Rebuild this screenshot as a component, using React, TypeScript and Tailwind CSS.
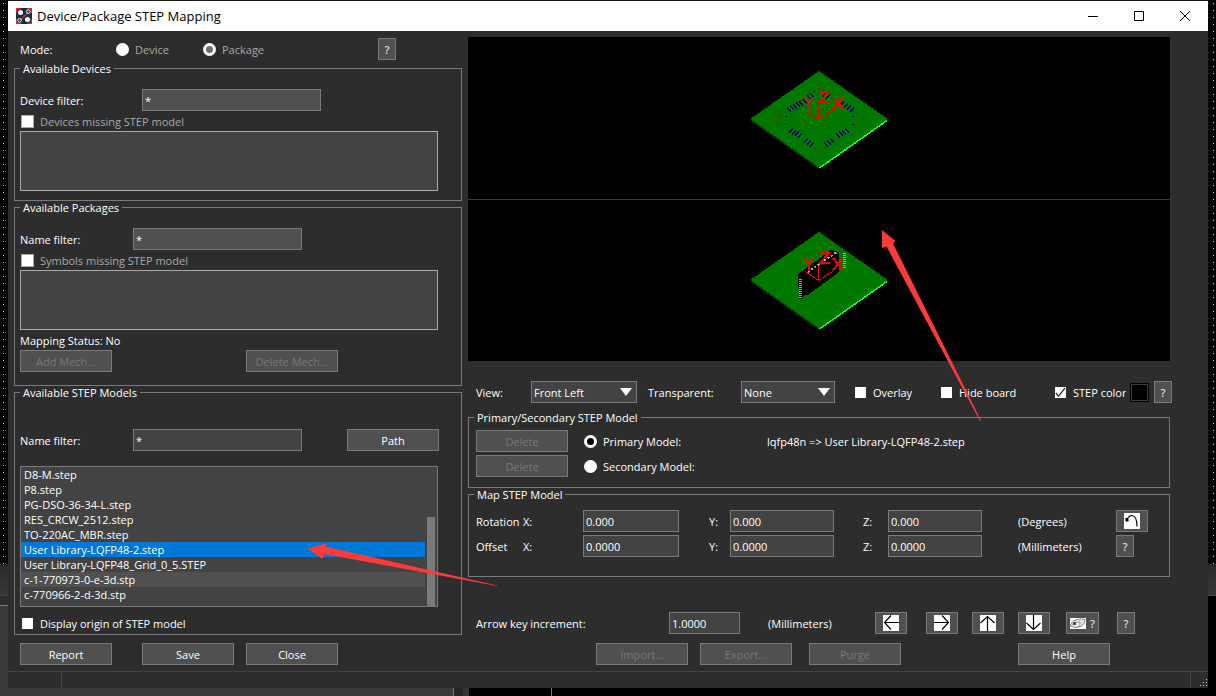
import { useState } from "react";
import type { ButtonHTMLAttributes, InputHTMLAttributes, ReactNode } from "react";
import { twMerge } from "tailwind-merge";

const STEP_MODELS = [
  "D8-M.step",
  "P8.step",
  "PG-DSO-36-34-L.step",
  "RES_CRCW_2512.step",
  "TO-220AC_MBR.step",
  "User Library-LQFP48-2.step",
  "User Library-LQFP48_Grid_0_5.STEP",
  "c-1-770973-0-e-3d.stp",
  "c-770966-2-d-3d.stp",
];

function Button({
  className,
  ...props
}: ButtonHTMLAttributes<HTMLButtonElement>) {
  return (
    <button
      type="button"
      className={twMerge(
        "flex h-[22px] w-[92px] shrink-0 items-center justify-center border border-[#7a7a7a] bg-[#505050] text-white disabled:text-[#787878]",
        className
      )}
      {...props}
    />
  );
}

function HelpButton({ label }: { label: string }) {
  return (
    <Button className="w-[18px] font-semibold text-[#dcdcdc]" aria-label={label}>
      ?
    </Button>
  );
}

function TextField({
  className,
  ...props
}: InputHTMLAttributes<HTMLInputElement>) {
  return (
    <input
      type="text"
      className={twMerge(
        "h-[22px] min-w-0 border border-[#7a7a7a] bg-[#434343] px-[2px] text-white outline-none disabled:bg-[#505050]",
        className
      )}
      {...props}
    />
  );
}

function Group({
  title,
  className,
  children,
}: {
  title: string;
  className?: string;
  children: ReactNode;
}) {
  return (
    <fieldset
      className={twMerge("min-w-0 border border-[#7a7a7a] px-[5px]", className)}
    >
      <legend className="px-[3px] leading-[13px]">{title}</legend>
      {children}
    </fieldset>
  );
}

interface CheckProps {
  id: string;
  label: string;
  disabled?: boolean;
  defaultChecked?: boolean;
  className?: string;
}

function Check({ id, label, disabled, defaultChecked, className }: CheckProps) {
  return (
    <div className={twMerge("flex h-5 items-center", className)}>
      <span className="grid size-[15px] shrink-0 place-items-center">
        <input
          id={id}
          type="checkbox"
          disabled={disabled}
          defaultChecked={defaultChecked}
          className="peer col-start-1 row-start-1 size-[11px] appearance-none bg-white disabled:size-[13px] disabled:border disabled:border-[#aaaaaa]"
        />
        <svg
          viewBox="0 0 11 11"
          className="pointer-events-none col-start-1 row-start-1 hidden size-[11px] peer-checked:block"
          fill="none"
          stroke="#222"
          strokeWidth="1.3"
        >
          <path d="M1 6 3.500 9.300 10 1.200" />
        </svg>
      </span>
      <label
        htmlFor={id}
        className={twMerge(
          "ml-[5px] overflow-hidden whitespace-nowrap",
          disabled && "text-[#a8a8a8]"
        )}
      >
        {label}
      </label>
    </div>
  );
}

function Radio({
  id,
  name,
  label,
  disabled,
  defaultChecked,
  className,
}: CheckProps & { name: string }) {
  return (
    <div className={twMerge("flex items-center gap-[6px]", className)}>
      <input
        id={id}
        name={name}
        type="radio"
        disabled={disabled}
        defaultChecked={defaultChecked}
        className="size-[13px] appearance-none rounded-full border-[3px] border-white bg-white checked:bg-black disabled:checked:bg-[#6e6e6e]"
      />
      <label htmlFor={id} className={disabled ? "text-[#a8a8a8]" : ""}>
        {label}
      </label>
    </div>
  );
}

function Dropdown({
  id,
  options,
  className,
}: {
  id: string;
  options: string[];
  className: string;
}) {
  return (
    <div className={twMerge("grid items-center", className)}>
      <select
        id={id}
        className="col-start-1 row-start-1 h-[22px] w-full appearance-none border border-[#7a7a7a] bg-[#434343] px-[2px] text-white outline-none"
      >
        {options.map((option) => (
          <option key={option}>{option}</option>
        ))}
      </select>
      <svg
        viewBox="0 0 12 8"
        className="pointer-events-none col-start-1 row-start-1 mr-[5px] h-2 w-3 justify-self-end"
      >
        <path d="M0 0h12L6 8z" fill="#fff" />
      </svg>
    </div>
  );
}

function Board({ children }: { children?: ReactNode }) {
  return (
    <svg
      viewBox="751 70 137 98"
      className="h-[98px] w-[137px]"
      shapeRendering="crispEdges"
      fill="none"
    >
      <path d="M819 70 887 117.500v2l-68 48-68-48v-2z" fill="#007800" />
      <path d="M751 119 819 167" stroke="#0a3d0a" strokeWidth="1.500" />
      <path d="M819.500 167 887 119.500" stroke="#1cff1c" strokeWidth="1.500" />
      {children}
      <g stroke="#ff0000">
        <path d="M818.500 104v14M818.500 118.500l-13-9M818.500 118.500 834 108.500" />
        <path
          d="M804 96l4.500 6 4.500-6M808.500 102v7M819 91h10l-9 10h9.500M833 96l10 12M843 96l-10 12"
          strokeWidth="2"
        />
      </g>
    </svg>
  );
}

function PadRows() {
  const pads = [
    [787, 109], [790, 107], [793, 106], [796, 104], [799, 103], [803, 101],
    [807, 97], [810, 95], [823, 94], [826, 96],
    [840, 103], [844, 105], [847, 107], [850, 109],
  ];
  const frontPads = [
    [789, 130], [792, 132], [795, 133], [798, 135], [804, 140], [807, 142],
    [810, 144],
  ];
  return (
    <>
      <path
        d="M819 87 865 118.500 819 150.500 773.500 118.500z"
        stroke="#5a3200"
        strokeDasharray="2 2"
      />
      <g stroke="#00007c" strokeWidth="1.200">
        {pads.map(([x, y]) => (
          <path
            key={x}
            d={x < 819 ? `M${x} ${y - 3}l4 5` : `M${x} ${y + 2}l4-5`}
          />
        ))}
        {frontPads.map(([x, y]) => (
          <path
            key={x}
            d={`M${x} ${y + 2}l4-5M${1638 - x} ${y + 2}l-4-5`}
          />
        ))}
      </g>
      <path d="M785 115.500h2M852 115.500h2M785 123.500h1M852 123.500h2" stroke="#00007c" />
    </>
  );
}

function ChipBody() {
  return (
    <>
      <path d="M798 112 831 88l8 2v20l-31 23h-4l-2 4h-3z" fill="#000" />
      <path
        d="M808 110 837 90"
        stroke="#b0b0b0"
        strokeWidth="2"
        strokeDasharray="2 2"
      />
      <path
        d="M800.500 117v20M844.500 91v15"
        stroke="#a0a0a0"
        strokeWidth="3"
        strokeDasharray="1 1"
      />
    </>
  );
}

function ArrowIcon({ d }: { d: string }) {
  return (
    <svg
      viewBox="0 0 16 16"
      className="size-4 bg-white"
      fill="none"
      stroke="#000"
      strokeWidth="1.200"
    >
      <path d={d} />
    </svg>
  );
}

const NUDGES = [
  { label: "Nudge left", d: "M16 7.500H1.500M8 .5l-6.500 7L8 14.500" },
  { label: "Nudge right", d: "M0 7.500h14.500M8 .5l6.500 7-6.500 7" },
  { label: "Nudge up", d: "M7.500 16V1.500M.5 8l7-6.500 7 6.500" },
  { label: "Nudge down", d: "M7.500 0v14.500M.5 8l7 6.500 7-6.500" },
];

function AxisRow({
  name,
  value,
  unit,
  children,
}: {
  name: string;
  value: string;
  unit: string;
  children: ReactNode;
}) {
  const id = name.toLowerCase();
  return (
    <div className="grid grid-cols-[47px_60px_96px_30px_21px_104px_29px_25px_94px_36px_98px_32px] items-center">
      <span>{name}</span>
      <label htmlFor={`${id}-x`}>X:</label>
      <TextField id={`${id}-x`} defaultValue={value} />
      <label htmlFor={`${id}-y`} className="col-start-5">
        Y:
      </label>
      <TextField id={`${id}-y`} defaultValue={value} />
      <label htmlFor={`${id}-z`} className="col-start-8">
        Z:
      </label>
      <TextField id={`${id}-z`} defaultValue={value} />
      <span className="col-start-11">{unit}</span>
      {children}
    </div>
  );
}

function TitleBar() {
  return (
    <header className="flex h-[30px] items-center bg-white text-black">
      <svg viewBox="0 0 16 16" className="ml-2 size-4">
        <rect width="16" height="16" rx="1.500" fill="#12303c" />
        <path
          d="M5 11.500 11.500 5M.5 5V2Q.5.5 2 .5h3M11 .5h3.500q1 0 1 1.500v3M15.500 11v3q0 1.500-1.500 1.500h-3M5 15.500H2Q.5 15.500.5 14v-3"
          stroke="#d8203c"
          strokeWidth="1.500"
          fill="none"
        />
        <circle cx="4.500" cy="4.500" r="2.500" fill="#fff" />
        <circle cx="11.500" cy="11.500" r="2.500" fill="#fff" />
        <circle cx="12.300" cy="3.600" r="1.800" fill="none" stroke="#fff" />
        <circle cx="3.600" cy="12.300" r="1.800" fill="none" stroke="#fff" />
      </svg>
      <h1 className="ml-[5px] flex-1 text-[13px]">
        Device/Package STEP Mapping
      </h1>
      {[
        { label: "Minimize", d: "M0 5.500h10" },
        { label: "Maximize", d: "M.5.5h9v9h-9z" },
        { label: "Close window", d: "M0 0l10 10M10 0 0 10" },
      ].map(({ label, d }) => (
        <button
          key={label}
          type="button"
          aria-label={label}
          className="grid h-[30px] w-[46px] place-items-center"
        >
          <svg
            viewBox="0 0 10 10"
            className="size-[10px]"
            fill="none"
            stroke="#000"
          >
            <path d={d} />
          </svg>
        </button>
      ))}
    </header>
  );
}

function LibraryColumn() {
  const [selected, setSelected] = useState("User Library-LQFP48-2.step");

  return (
    <div className="w-[448px] shrink-0 pt-[7px]">
      <div className="mb-[2px] flex h-[22px] items-center pl-[6px]">
        <span className="w-24">Mode:</span>
        <Radio id="mode-device" name="mode" label="Device" disabled className="w-[87px]" />
        <Radio id="mode-package" name="mode" label="Package" disabled defaultChecked className="w-[175px]" />
        <HelpButton label="Mode help" />
      </div>

      <Group title="Available Devices" className="pb-[9px] pt-[14px]">
        <div className="flex items-center">
          <label htmlFor="device-filter" className="w-[122px]">
            Device filter:
          </label>
          <TextField id="device-filter" defaultValue="*" disabled className="w-[179px]" />
        </div>
        <Check id="devices-missing" label="Devices missing STEP model" disabled />
        <div
          role="listbox"
          aria-label="Devices"
          className="h-[60px] w-[418px] border border-[#aaaaaa] bg-[#434343]"
        />
      </Group>

      <Group title="Available Packages" className="pb-[13px] pt-[14px]">
        <div className="flex items-center">
          <label htmlFor="package-filter" className="w-[113px]">
            Name filter:
          </label>
          <TextField id="package-filter" defaultValue="*" disabled className="w-[169px]" />
        </div>
        <Check id="symbols-missing" label="Symbols missing STEP model" disabled />
        <div
          role="listbox"
          aria-label="Packages"
          className="h-[60px] w-[418px] border border-[#aaaaaa] bg-[#434343]"
        />
        <p className="h-5 leading-[22px]">Mapping Status: No</p>
        <div className="flex gap-[134px]">
          <Button disabled>Add Mech...</Button>
          <Button disabled>Delete Mech...</Button>
        </div>
      </Group>

      <Group title="Available STEP Models" className="pb-px pt-[30px]">
        <div className="flex items-center">
          <label htmlFor="step-filter" className="w-[113px]">
            Name filter:
          </label>
          <TextField id="step-filter" defaultValue="*" className="w-[169px]" />
          <Button className="ml-[45px]">Path</Button>
        </div>
        <div className="mt-[15px] flex h-[141px] w-[418px] justify-between border border-[#7a7a7a] bg-[#434343] pr-[2px]">
          <ul role="listbox" aria-label="STEP models" className="w-[404px]">
            {STEP_MODELS.map((model, i) => (
              <li
                key={model}
                role="option"
                aria-selected={model === selected}
                onClick={() => setSelected(model)}
                className={twMerge(
                  "h-[15px] px-[3px] leading-[15px]",
                  i === 7 && "bg-[#505050]",
                  model === selected && "bg-[#0078d7]"
                )}
              >
                {model}
              </li>
            ))}
          </ul>
          <div className="h-[89px] w-2 self-end bg-[#7a7a7a]" />
        </div>
        <Check id="display-origin" label="Display origin of STEP model" className="mt-[6px]" />
      </Group>

      <div className="mt-2 flex pl-[6px]">
        <Button>Report</Button>
        <Button className="ml-[30px]">Save</Button>
        <Button className="ml-3">Close</Button>
      </div>
    </div>
  );
}

function MappingColumn() {
  return (
    <div className="flex min-w-0 flex-1 flex-col pr-[38px] pt-[6px]">
      <div className="bg-black">
        <div className="grid h-[163px] place-items-center border-b border-[#3c3c3c] pt-1">
          <Board>
            <PadRows />
          </Board>
        </div>
        <div className="grid h-[161px] place-items-center">
          <Board>
            <ChipBody />
          </Board>
        </div>
      </div>

      <div className="mt-5 -mr-[2px] flex items-center pl-2">
        <label htmlFor="view" className="w-[55px]">
          View:
        </label>
        <Dropdown id="view" options={["Front Left", "Front Right", "Top"]} className="w-[106px]" />
        <label htmlFor="transparent" className="ml-[11px] w-[93px]">
          Transparent:
        </label>
        <Dropdown id="transparent" options={["None", "Board", "All"]} className="w-[94px]" />
        <Check id="overlay" label="Overlay" className="ml-[18px] w-[86px]" />
        <Check id="hide-board" label="Hide board" className="w-[114px]" />
        <Check id="step-color" label="STEP color" defaultChecked className="w-[73px]" />
        <button
          type="button"
          aria-label="Pick STEP color"
          className="ml-1 mr-[5px] size-[19px] border border-black bg-black ring-1 ring-inset ring-[#3c3c3c]"
        />
        <HelpButton label="View help" />
      </div>

      <Group title="Primary/Secondary STEP Model" className="mt-2 pb-[10px] pt-[6px]">
        <div className="grid grid-cols-[108px_183px_1fr] items-center gap-y-[3px] pl-[2px]">
          <Button disabled>Delete</Button>
          <Radio id="primary" name="model" label="Primary Model:" defaultChecked />
          <span>lqfp48n =&gt; User Library-LQFP48-2.step</span>
          <Button disabled>Delete</Button>
          <Radio id="secondary" name="model" label="Secondary Model:" />
        </div>
      </Group>

      <Group title="Map STEP Model" className="pb-[19px] pt-[9px]">
        <div className="flex flex-col gap-[3px] pl-[2px]">
          <AxisRow name="Rotation" value="0.000" unit="(Degrees)">
            <Button className="w-8" aria-label="Rotate">
              <svg viewBox="0 0 16 16" className="size-4 bg-white" fill="none">
                <path d="M3 6.500Q5 2.500 8 2.500q5 .5 5 11" stroke="#000" strokeWidth="1.200" />
                <path d="M1.500 4.500 4.500 6v2.500h-3z" fill="#000" />
              </svg>
            </Button>
          </AxisRow>
          <AxisRow name="Offset" value="0.0000" unit="(Millimeters)">
            <HelpButton label="Map help" />
          </AxisRow>
        </div>
      </Group>

      <div className="mt-[35px] flex items-center pl-2">
        <label htmlFor="increment" className="w-[193px]">
          Arrow key increment:
        </label>
        <TextField id="increment" defaultValue="1.0000" className="w-[71px]" />
        <span className="ml-7 w-[107px]">(Millimeters)</span>
        <div className="flex gap-[14px]">
          {NUDGES.map(({ label, d }) => (
            <Button key={label} aria-label={label} className="w-8 first:mr-[5px]">
              <ArrowIcon d={d} />
            </Button>
          ))}
        </div>
        <Button className="ml-4 w-[33px] gap-1 font-semibold text-[#dcdcdc]" aria-label="Preview help">
          <svg viewBox="0 0 16 11" className="h-[11px] w-4 bg-white" fill="none" stroke="#888">
            <path d="M.5 7Q2 2.500 7 1.500q5-1 8 0 0 5-4 7-5 2-10 0z" fill="#e4e4e4" />
            <path d="M2 7q3-4 8-3 1 3-2 5" strokeWidth=".8" />
            <circle cx="4.500" cy="5.500" r="1.500" fill="#333" stroke="none" />
          </svg>
          ?
        </Button>
        <span className="ml-[18px]">
          <HelpButton label="Arrow key help" />
        </span>
      </div>

      <div className="mt-[9px] flex pl-32">
        <Button disabled>Import...</Button>
        <Button disabled className="ml-3">Export...</Button>
        <Button disabled className="ml-[17px]">Purge</Button>
        <Button className="ml-[117px]">Help</Button>
      </div>
    </div>
  );
}

// The board editor that shows on both sides of the dialog
function DeskEdge({ side }: { side: "left" | "right" }) {
  return (
    <div className="flex w-2 shrink-0 flex-col">
      <div
        className={twMerge(
          "h-[564px] bg-black bg-[radial-gradient(circle_at_3.5px_3.5px,#e0e0e0_0.7px,transparent_0.8px)] bg-[size:8px_7px]",
          side === "right" && "bg-[position:2px_0px]"
        )}
      />
      <div className="h-8 border-b border-[#444444] bg-linear-to-b from-[#2a2a2a] to-[#383838]" />
      {side === "left" && (
        <>
          <div className="h-[10px] border-b border-[#777777] bg-[#2d2d2d]" />
          <div className="flex-1 bg-[#3a3a3a]" />
        </>
      )}
    </div>
  );
}

export default function App() {
  return (
    <div className="relative flex min-h-screen flex-col overflow-hidden bg-black font-['Open_Sans','Segoe_UI',sans-serif] text-[11px] leading-[15px] text-white">
      <div className="flex">
        <DeskEdge side="left" />
        <main className="min-w-0 flex-1 bg-[#2d2d2d]">
          <div className="h-px bg-[#1a1a1a]" />
          <TitleBar />
          <div className="flex gap-[6px] pl-[6px]">
            <LibraryColumn />
            <MappingColumn />
          </div>
          <footer className="mt-[6px] flex h-[17px] border-t border-[#444444]">
            <div className="w-[54px] border-r border-[#444444]" />
            <div className="flex-1 border-r border-[#444444]" />
            <svg viewBox="0 0 17 16" className="h-4 w-[17px]" fill="#c8c8c8">
              <path d="M15 7h1v1h-1zM12 10h1v1h-1zM15 10h1v1h-1zM9 13h1v1h-1zM12 13h1v1h-1zM15 13h1v1h-1z" />
            </svg>
          </footer>
        </main>
        <DeskEdge side="right" />
      </div>
      <div className="flex flex-1">
        <div className="w-[453px] bg-[#3a3a3a]" />
        <div className="w-px bg-[#777777]" />
        <div className="w-[9px] bg-[#262626]" />
        <div className="w-[6px] bg-[#333333]" />
        <div className="ml-[82px] w-px bg-[#5f8a3c]" />
      </div>

      <svg
        viewBox="0 0 1216 696"
        className="pointer-events-none absolute left-0 top-0 h-[696px] w-[1216px]"
        fill="#fd3a3a"
      >
        <path d="M882 230 895.500 241 893 243.500 981 420.500 980 421 886.500 246.500 882 248z" />
        <path d="M308 548.500 327 543 325.500 546.500 497 585.500v.5L324.500 554 322.500 559z" />
      </svg>
    </div>
  );
}
